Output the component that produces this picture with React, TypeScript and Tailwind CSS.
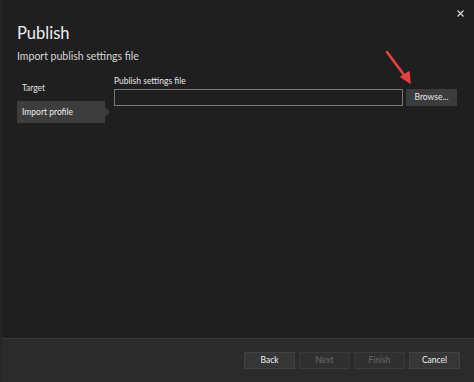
import React from "react";

export default function App() {
  return (
    <div
      className="relative flex h-[382px] w-[474px] flex-col overflow-hidden bg-[#1f1f1f] text-[#e6e6e6]"
      style={{ fontFamily: 'Lato, "Open Sans", sans-serif' }}
    >
      {/* left subtle edge */}
      <div className="absolute left-0 top-0 h-full w-[2px] bg-[#262626]" />
      {/* close */}
      <svg className="absolute left-[457px] top-[10px]" width="7" height="7" viewBox="0 0 7 7">
        <path d="M0.5 0.5 L6.5 6.5 M6.5 0.5 L0.5 6.5" stroke="#d8d8d8" strokeWidth="1.2" />
      </svg>

      <div className="flex-1 pl-[17px] pt-[22px]">
        <div className="text-[16.5px] leading-[22px] text-[#f0f0f0]">Publish</div>
        <div className="mt-[5px] text-[10.5px] leading-[14px] text-[#d6d6d6]">Import publish settings file</div>

        <div className="mt-[13px] flex">
          <div className="flex w-[93px] flex-col pt-[2px]">
            <div className="h-[20px] pl-[5px] text-[8.5px] leading-[20px] text-[#e0e0e0]">Target</div>
            <div className="relative mt-[3px] h-[22px] w-[88px] bg-[#3d3d3d] pl-[5px] text-[8.5px] leading-[22px] text-[#ececec]">
              Import profile
              <div className="absolute right-[-5px] top-[6px] h-0 w-0 border-y-[5px] border-l-[5px] border-y-transparent border-l-[#3d3d3d]" />
            </div>
          </div>
          <div className="ml-[4px] flex flex-col">
            <div className="h-[11px] text-[8.5px] leading-[11px] text-[#e6e6e6]">Publish settings file</div>
            <div className="mt-[2px] flex items-center gap-[3px]">
              <div className="h-[17px] w-[289px] border border-[#7a7a7a] bg-[#1f1f1f]" />
              <div className="flex h-[17px] w-[51px] items-center justify-center bg-[#3c3c3c] text-[8.5px] text-[#e6e6e6]">
                Browse...
              </div>
            </div>
          </div>
        </div>
      </div>

      {/* red arrow */}
      <svg className="absolute left-[380px] top-[47px]" width="40" height="42" viewBox="0 0 40 42">
        <line x1="7" y1="5" x2="27" y2="32" stroke="#e8403c" strokeWidth="2.6" strokeLinecap="round" />
        <path d="M21 30 L30 36 L29 25 Z" fill="#e8403c" stroke="#e8403c" strokeWidth="1.5" strokeLinejoin="round" />
      </svg>

      <div className="flex h-[44px] items-center justify-end gap-[4px] border-t border-[#363636] bg-[#2b2b2b] pr-[14px]">
        <div className="flex h-[17px] w-[51px] items-center justify-center border border-[#414141] bg-[#363636] text-[8.5px] text-[#f0f0f0]">Back</div>
        <div className="flex h-[17px] w-[51px] items-center justify-center border border-[#3a3a3a] bg-[#303030] text-[8.5px] text-[#6a6a6a]">Next</div>
        <div className="flex h-[17px] w-[51px] items-center justify-center border border-[#3a3a3a] bg-[#303030] text-[8.5px] text-[#6a6a6a]">Finish</div>
        <div className="flex h-[17px] w-[51px] items-center justify-center border border-[#414141] bg-[#363636] text-[8.5px] text-[#f0f0f0]">Cancel</div>
      </div>
    </div>
  );
}
